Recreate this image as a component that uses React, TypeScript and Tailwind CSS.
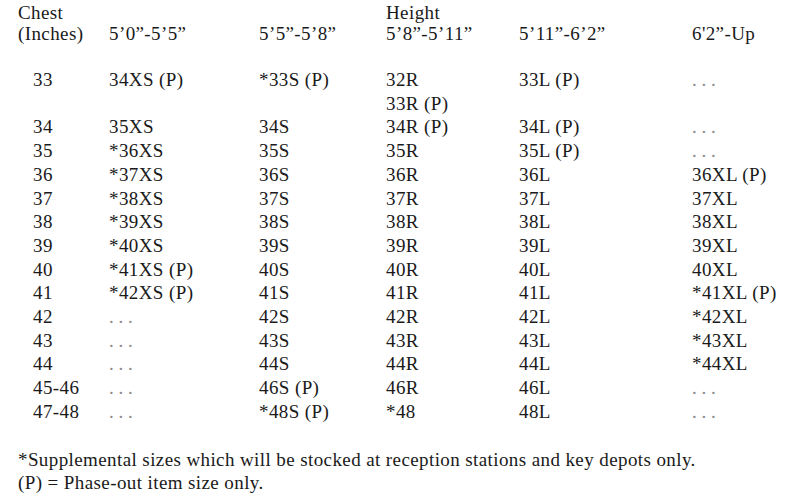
const ROWS: { chest: string; cells: string[][] }[] = [
  { chest: "33", cells: [["34XS (P)"], ["*33S (P)"], ["32R", "33R (P)"], ["33L (P)"], ["..."]] },
  { chest: "34", cells: [["35XS"], ["34S"], ["34R (P)"], ["34L (P)"], ["..."]] },
  { chest: "35", cells: [["*36XS"], ["35S"], ["35R"], ["35L (P)"], ["..."]] },
  { chest: "36", cells: [["*37XS"], ["36S"], ["36R"], ["36L"], ["36XL (P)"]] },
  { chest: "37", cells: [["*38XS"], ["37S"], ["37R"], ["37L"], ["37XL"]] },
  { chest: "38", cells: [["*39XS"], ["38S"], ["38R"], ["38L"], ["38XL"]] },
  { chest: "39", cells: [["*40XS"], ["39S"], ["39R"], ["39L"], ["39XL"]] },
  { chest: "40", cells: [["*41XS (P)"], ["40S"], ["40R"], ["40L"], ["40XL"]] },
  { chest: "41", cells: [["*42XS (P)"], ["41S"], ["41R"], ["41L"], ["*41XL (P)"]] },
  { chest: "42", cells: [["..."], ["42S"], ["42R"], ["42L"], ["*42XL"]] },
  { chest: "43", cells: [["..."], ["43S"], ["43R"], ["43L"], ["*43XL"]] },
  { chest: "44", cells: [["..."], ["44S"], ["44R"], ["44L"], ["*44XL"]] },
  { chest: "45-46", cells: [["..."], ["46S (P)"], ["46R"], ["46L"], ["..."]] },
  { chest: "47-48", cells: [["..."], ["*48S (P)"], ["*48"], ["48L"], ["..."]] },
];

const GRID = "grid grid-cols-[91px_150px_127px_133px_173px_1fr]";

function Cell({ text }: { text: string }) {
  if (text === "...") {
    return <span className="text-[#8a8a8a] tracking-normal">. . .</span>;
  }
  return <span>{text}</span>;
}

export default function App() {
  return (
    <div
      className="w-[791px] h-[500px] bg-white text-[#1a1a1a] text-[19px] tracking-[0.4px] pl-[18px] pt-[2px] overflow-hidden"
      style={{ fontFamily: '"Liberation Serif", "Times New Roman", serif' }}
    >
      <div className={`${GRID} leading-[21px]`}>
        <div>Chest</div>
        <div />
        <div />
        <div>Height</div>
        <div />
        <div />
        <div>(Inches)</div>
        <div>5’0”-5’5”</div>
        <div>5’5”-5’8”</div>
        <div>5’8”-5’11”</div>
        <div>5’11”-6’2”</div>
        <div>6'2”-Up</div>
      </div>

      <div className={`${GRID} leading-[23.7px] mt-[24px]`}>
        {ROWS.map(row => (
          <div key={row.chest} className="contents">
            <div className="pl-[15px]">{row.chest}</div>
            {row.cells.map((lines, i) => (
              <div key={i} className="flex flex-col">
                {lines.map(line => (
                  <Cell key={line} text={line} />
                ))}
              </div>
            ))}
          </div>
        ))}
      </div>

      <div className="mt-[24px] leading-[23px]">
        <p>*Supplemental sizes which will be stocked at reception stations and key depots only.</p>
        <p>(P) = Phase-out item size only.</p>
      </div>
    </div>
  );
}
